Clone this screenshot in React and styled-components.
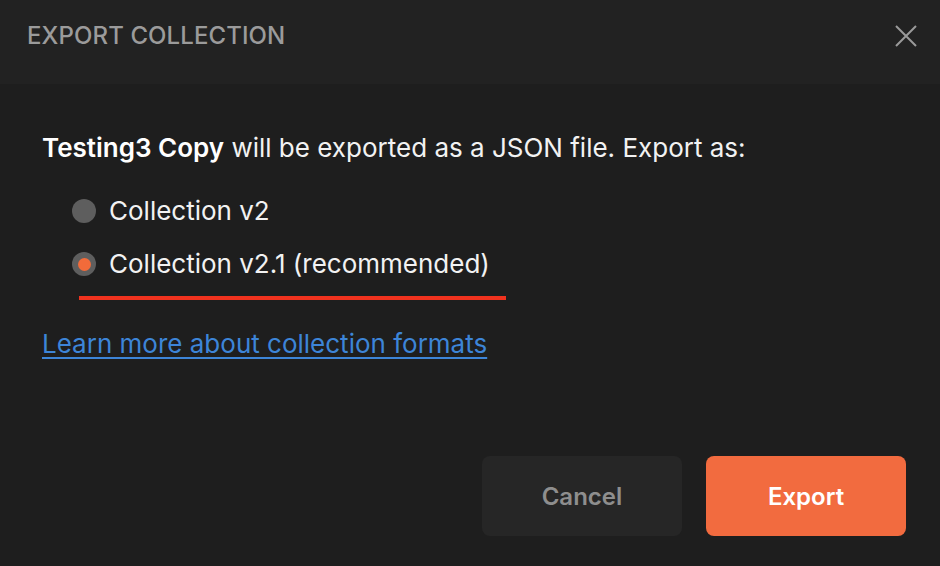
import React, { useState } from 'react';
import styled, { createGlobalStyle } from 'styled-components';

const GlobalStyle = createGlobalStyle`
  html, body {
    margin: 0;
    padding: 0;
    background: #1e1e1e;
  }
  body {
    font-family: Inter, "Noto Sans", sans-serif;
    -webkit-font-smoothing: antialiased;
  }
`;

const Dialog = styled.div`
  width: 940px;
  height: 566px;
  display: flex;
  flex-direction: column;
  background: #1e1e1e;
  color: #ffffff;
`;

const Header = styled.div`
  height: 84px;
  flex-shrink: 0;
  display: flex;
  align-items: flex-start;
  justify-content: space-between;
  padding: 0 22px 0 27px;
  background: #222222;
`;

const Title = styled.h1`
  margin: 21px 0 0;
  font-size: 24px;
  line-height: 30px;
  font-weight: 500;
  color: #9b9b9b;
  letter-spacing: 0.1px;
`;

const CloseButton = styled.button`
  margin-top: 24px;
  width: 24px;
  height: 24px;
  padding: 0;
  border: none;
  background: none;
  cursor: pointer;
  display: flex;
  align-items: center;
  justify-content: center;
`;

const Body = styled.div`
  flex: 1;
  padding: 48px 42px 0;
  display: flex;
  flex-direction: column;
`;

const Message = styled.p`
  margin: 0;
  font-size: 26px;
  line-height: 32px;
  color: #f2f2f2;

  strong {
    font-weight: 600;
    color: #ffffff;
  }
`;

const Options = styled.div`
  margin-top: 31px;
  padding-left: 30px;
  display: flex;
  flex-direction: column;
  gap: 21px;
`;

const Option = styled.label`
  display: flex;
  align-items: center;
  gap: 13px;
  font-size: 26px;
  line-height: 32px;
  color: #f2f2f2;
  cursor: pointer;
`;

const RadioDot = styled.span`
  width: 24px;
  height: 24px;
  border-radius: 50%;
  background: #5e5e5e;
  display: flex;
  align-items: center;
  justify-content: center;

  &::after {
    content: '';
    width: 13px;
    height: 13px;
    border-radius: 50%;
    background: ${(props) => (props.$checked ? '#f26b3a' : 'transparent')};
  }
`;

const Highlight = styled.div`
  margin: 16px 0 0 37px;
  width: 427px;
  height: 4px;
  background: #f0321e;
`;

const LearnLink = styled.a`
  margin-top: 28px;
  align-self: flex-start;
  font-size: 26px;
  line-height: 32px;
  color: #3d85d8;
  text-decoration: underline;
  text-underline-offset: 4px;
  text-decoration-thickness: 2px;
`;

const Footer = styled.div`
  display: flex;
  justify-content: flex-end;
  gap: 24px;
  padding: 0 34px 30px;
`;

const Button = styled.button`
  width: 200px;
  height: 80px;
  border: none;
  border-radius: 8px;
  font-family: inherit;
  font-size: 24px;
  font-weight: 600;
  cursor: pointer;
  background: ${(props) => (props.$primary ? '#f26b3f' : '#262626')};
  color: ${(props) => (props.$primary ? '#ffffff' : '#8e8e8e')};
`;

const formats = [
  { id: 'v2', label: 'Collection v2' },
  { id: 'v2.1', label: 'Collection v2.1 (recommended)' },
];

export default function App() {
  const [format, setFormat] = useState('v2.1');

  return (
    <>
      <GlobalStyle />
      <Dialog>
        <Header>
          <Title>EXPORT COLLECTION</Title>
          <CloseButton aria-label="Close">
            <svg width="22" height="22" viewBox="0 0 22 22">
              <path
                d="M1 1 L21 21 M21 1 L1 21"
                stroke="#9a9a9a"
                strokeWidth="2"
                fill="none"
              />
            </svg>
          </CloseButton>
        </Header>

        <Body>
          <Message>
            <strong>Testing3 Copy</strong> will be exported as a JSON file. Export as:
          </Message>

          <Options>
            {formats.map((f) => (
              <Option key={f.id} onClick={() => setFormat(f.id)}>
                <RadioDot $checked={format === f.id} />
                {f.label}
              </Option>
            ))}
          </Options>
          <Highlight />

          <LearnLink href="#">Learn more about collection formats</LearnLink>
        </Body>

        <Footer>
          <Button>Cancel</Button>
          <Button $primary>Export</Button>
        </Footer>
      </Dialog>
    </>
  );
}
